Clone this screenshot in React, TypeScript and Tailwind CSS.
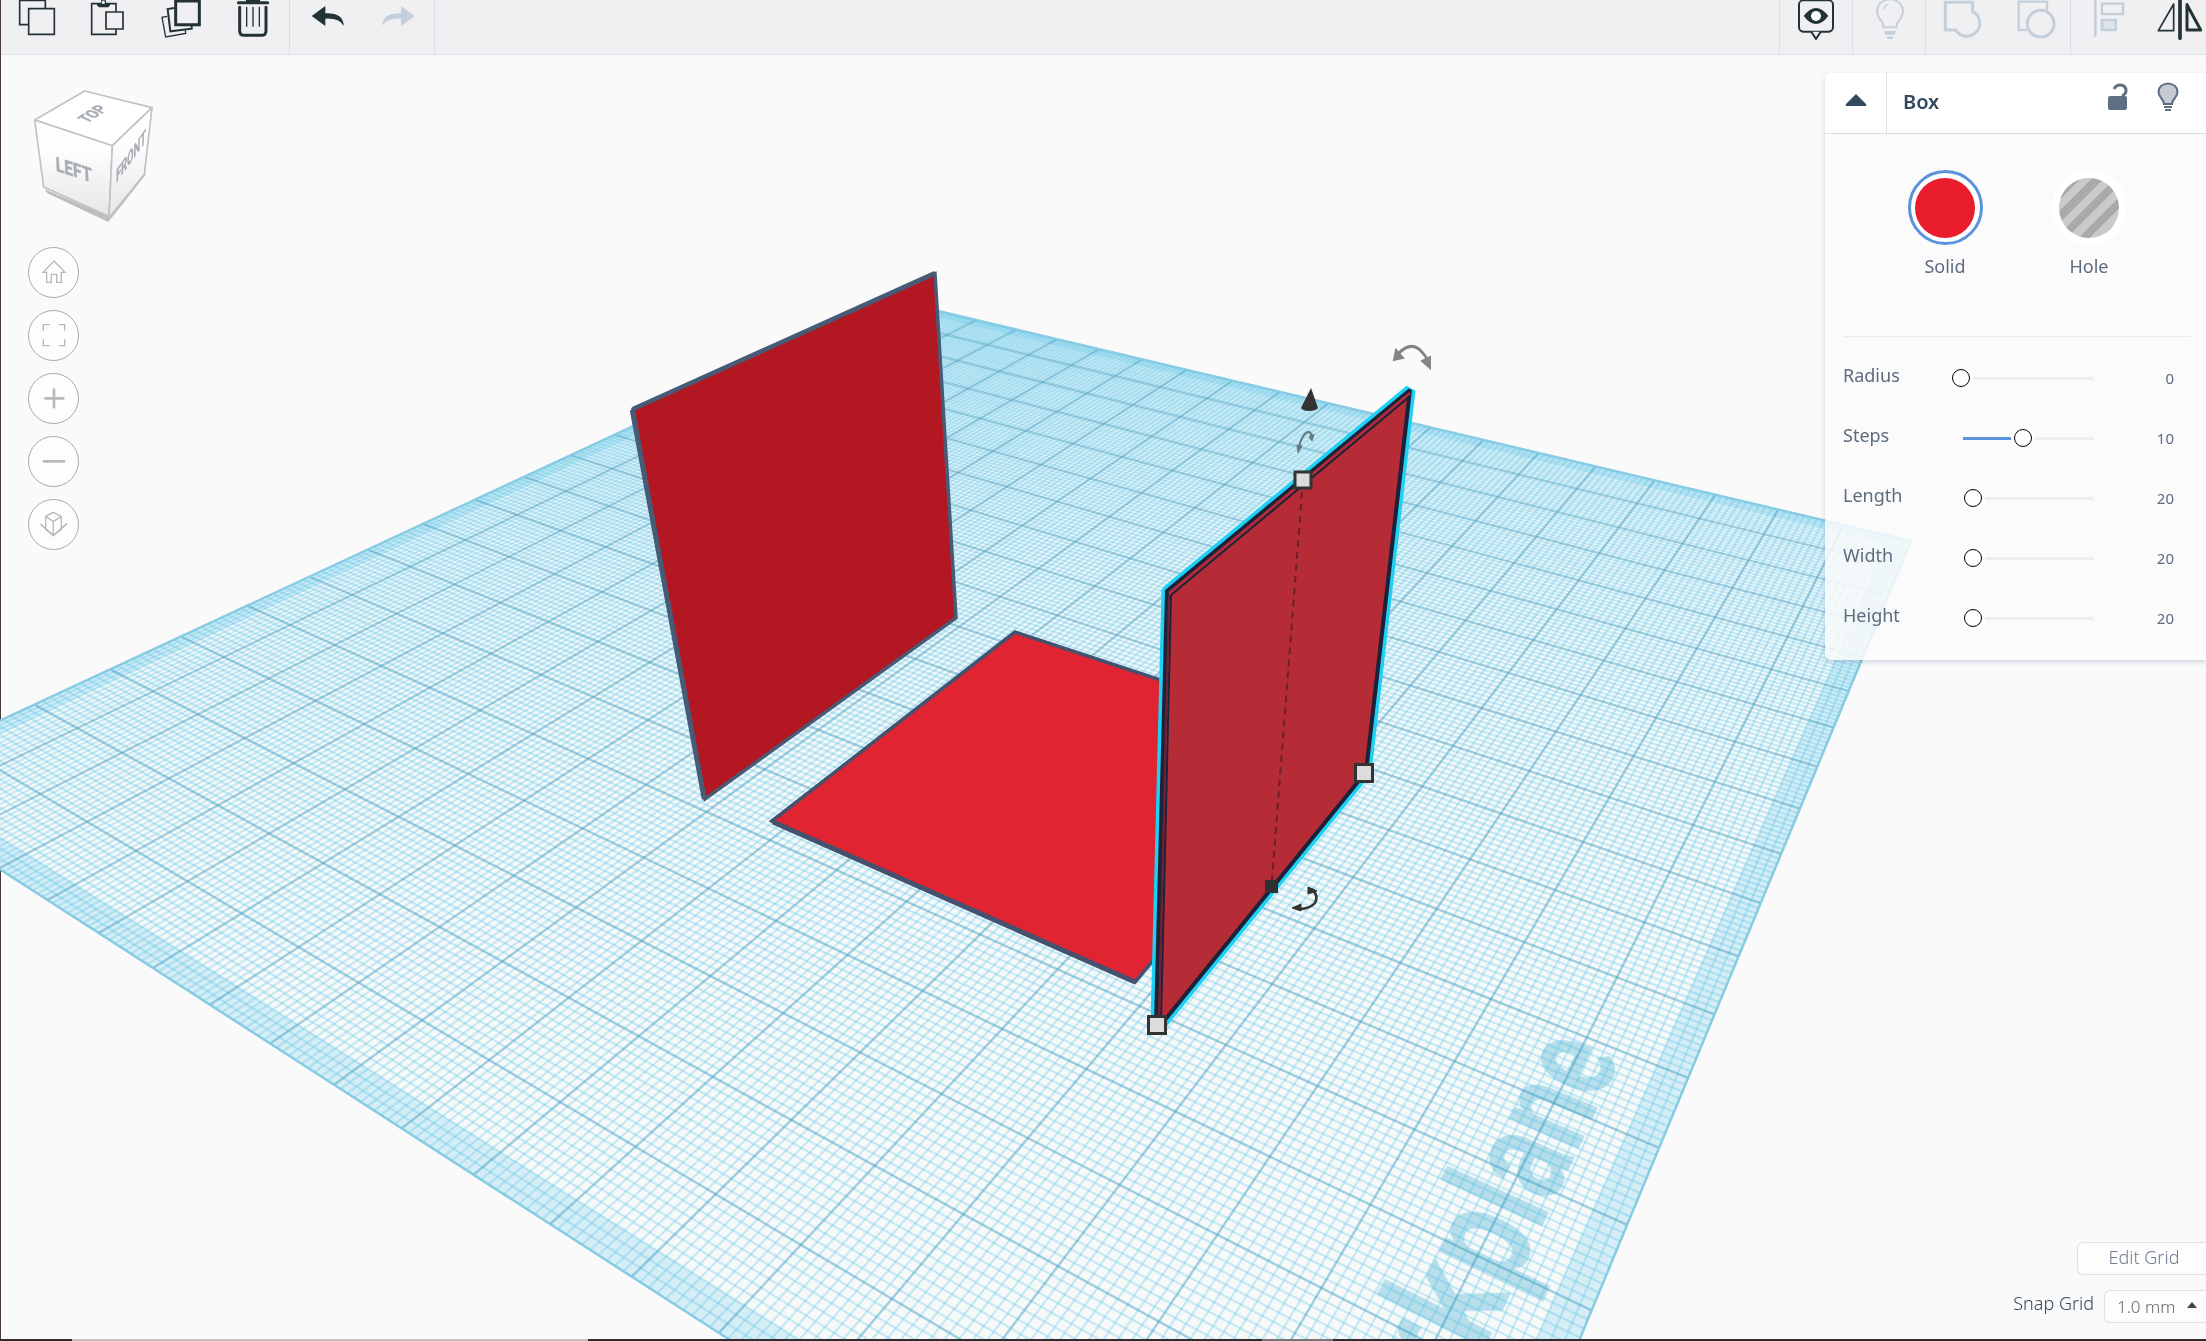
import { useState } from "react";
import type { CSSProperties, ReactNode } from "react";

type Point = [number, number];

/* ---------- workplane projection ---------- */

const PLANE_SIZE = 200; // mm
const CORNERS: Point[] = [
  [900, 302],
  [1911, 541],
  [1400, 1772],
  [-134, 783],
];

function squareToQuad([p0, p1, p2, p3]: Point[]) {
  const sx = p0[0] - p1[0] + p2[0] - p3[0];
  const sy = p0[1] - p1[1] + p2[1] - p3[1];
  const dx1 = p1[0] - p2[0];
  const dx2 = p3[0] - p2[0];
  const dy1 = p1[1] - p2[1];
  const dy2 = p3[1] - p2[1];
  const det = dx1 * dy2 - dx2 * dy1;
  const g = (sx * dy2 - dx2 * sy) / det;
  const h = (dx1 * sy - sx * dy1) / det;
  return {
    a: p1[0] - p0[0] + g * p1[0],
    b: p3[0] - p0[0] + h * p3[0],
    c: p0[0],
    d: p1[1] - p0[1] + g * p1[1],
    e: p3[1] - p0[1] + h * p3[1],
    f: p0[1],
    g,
    h,
  };
}

const m = squareToQuad(CORNERS);

function project(x: number, y: number) {
  const u = x / PLANE_SIZE;
  const v = y / PLANE_SIZE;
  const w = m.g * u + m.h * v + 1;
  return `${((m.a * u + m.b * v + m.c) / w).toFixed(2)} ${((m.d * u + m.e * v + m.f) / w).toFixed(2)}`;
}

// the label layer is 2000px wide, 10px to the millimetre
const K = 1 / 2000;
const planeMatrix = `matrix3d(${[
  m.a * K, m.d * K, 0, m.g * K,
  m.b * K, m.e * K, 0, m.h * K,
  0, 0, 1, 0,
  m.c, m.f, 0, 1,
].join(",")})`;

function rect(x0: number, y0: number, x1: number, y1: number) {
  return `M${project(x0, y0)}L${project(x1, y0)}L${project(x1, y1)}L${project(x0, y1)}Z`;
}

function gridLines(step: number, skip?: number) {
  const along: string[] = [];
  const across: string[] = [];
  for (let i = 0; i <= PLANE_SIZE; i += step) {
    if (skip && i % skip === 0) continue;
    along.push(`M${project(0, i)}L${project(PLANE_SIZE, i)}`);
    across.push(`M${project(i, 0)}L${project(i, PLANE_SIZE)}`);
  }
  return [along.join(""), across.join("")];
}

const minor = gridLines(1, 10);
const major = gridLines(10);
const BORDER = 3;

function Workplane() {
  return (
    <>
      <svg className="absolute left-0 top-0 h-[1341px] w-[2206px]" viewBox="0 0 2206 1341" aria-hidden="true">
        <path d={rect(0, 0, PLANE_SIZE, PLANE_SIZE)} fill="#f7f9f9" />
        <path
          d={rect(0, 0, PLANE_SIZE, PLANE_SIZE) + rect(BORDER, BORDER, PLANE_SIZE - BORDER, PLANE_SIZE - BORDER)}
          fill="#d5edf5"
          fillRule="evenodd"
        />
      </svg>
      <div
        className="absolute left-0 top-0 h-[2000px] w-[2000px] origin-top-left"
        style={{ transform: planeMatrix }}
      >
        <svg className="h-full w-full" viewBox="0 0 2000 2000">
          <text
            transform="translate(1938 1308) rotate(-90)"
            textAnchor="end"
            fill="#b7deea"
            className="font-['Roboto',sans-serif] text-[127px] font-bold"
          >
            Workplane
          </text>
        </svg>
      </div>
      <svg className="absolute left-0 top-0 h-[1341px] w-[2206px]" viewBox="0 0 2206 1341" aria-hidden="true">
        {minor.map((d, i) => (
          <path key={i} d={d} stroke="#4fc0e6" strokeOpacity="0.29" strokeWidth="2.2" />
        ))}
        {major.map((d, i) => (
          <path key={i} d={d} stroke="#3398c0" strokeOpacity="0.45" strokeWidth="2.4" />
        ))}
        <path d={rect(0, 0, PLANE_SIZE, PLANE_SIZE)} fill="none" stroke="#86cde6" strokeWidth="2" />
      </svg>
    </>
  );
}

/* ---------- shapes on the workplane ---------- */

function Handle({ x, y, size }: { x: number; y: number; size: number }) {
  return (
    <rect x={x - size / 2} y={y - size / 2} width={size} height={size} fill="#dcdcdc" stroke="#333" strokeWidth="3" />
  );
}

function Shapes() {
  return (
    <svg className="absolute left-0 top-0 h-[1341px] w-[2206px]" viewBox="0 0 2206 1341" fill="none" aria-hidden="true">
      {/* back wall */}
      <path d="M633 409L935 274L956 618L705 799Z" fill="#b31822" stroke="#475a76" strokeWidth="3.5" />
      <path d="M632 410L704 799M633 409L935 273" stroke="#475a76" strokeWidth="4.5" />
      {/* floor */}
      <path d="M772 821L1015 632L1200 693L1200 904L1135 982Z" fill="#e02432" stroke="#44526f" strokeWidth="3.5" />
      <path d="M773 822L1135 982" stroke="#44526f" strokeWidth="5" />
      {/* selected wall */}
      <path d="M1167 591L1410 390L1366 772L1160 1026L1156 1024Z" stroke="#1fd0f5" strokeWidth="11" strokeLinejoin="bevel" />
      <path
        d="M1167 591L1410 390L1366 772L1160 1026L1156 1024Z"
        fill="#b52c36"
        stroke="#1c2238"
        strokeWidth="4"
        strokeLinejoin="bevel"
      />
      <path d="M1169 593L1410 393" stroke="#b02c3c" strokeWidth="2.5" />
      <path d="M1171 595L1409 397M1171 595L1161 1022" stroke="#1c2238" strokeWidth="2" />
      <path d="M1169 596L1159 1018" stroke="#6b2036" strokeWidth="2" />
      <path d="M1302 492L1272 880" stroke="#6d2029" strokeWidth="2" strokeDasharray="7 5" />
      <rect x="1265" y="880" width="13" height="13" fill="#2f3030" />
      <Handle x={1303} y={480} size={16} />
      <Handle x={1364} y={773} size={17} />
      <Handle x={1157} y={1025} size={17} />
      {/* lift cone */}
      <path d="M1311 388L1301 408Q1303 411 1309 411Q1316 411 1318 408Z" fill="#333" />
      {/* rotate arrows */}
      <g stroke="#858585" strokeWidth="3">
        <path d="M1399 353Q1411 341 1421 351Q1426 356 1428 361" />
        <path d="M1396 350L1394 360L1403 358ZM1422 361L1430 368V357Z" fill="#858585" strokeWidth="2" />
      </g>
      <g stroke="#65797f" strokeWidth="2">
        <path d="M1299 447Q1302 434 1308 432Q1312 431 1311 439" />
        <path d="M1297 445L1298 453L1302 446ZM1309 437L1312 441L1314 434Z" fill="#65797f" strokeWidth="1" />
      </g>
      <g stroke="#333" strokeWidth="2.5">
        <path d="M1312 889Q1319 896 1315 903Q1311 908 1301 909" />
        <path d="M1308 887L1317 891L1308 894ZM1292 908L1301 904V911Z" fill="#333" strokeWidth="1" />
      </g>
    </svg>
  );
}

/* ---------- toolbar ---------- */

function ToolButton({ label, viewBox, muted, children }: { label: string; viewBox: string; muted?: boolean; children: ReactNode }) {
  return (
    <button
      type="button"
      aria-label={label}
      className={muted ? "h-full w-[72px] shrink-0 text-[#c3cfda]" : "h-full w-[72px] shrink-0 text-[#233233]"}
    >
      <svg className="h-full w-full" viewBox={viewBox} fill="none" stroke="currentColor" strokeWidth="5">
        {children}
      </svg>
    </button>
  );
}

function Toolbar() {
  return (
    <header className="relative z-10 flex h-[55px] justify-between overflow-hidden border-b border-[#dcdfe6] bg-[#f0f0f3]">
      <div className="flex h-[54px]">
        <div className="flex border-r border-[#dcdfe6]">
          <ToolButton label="Copy" viewBox="3 0 216 162">
            <path d="M86 74H59V1H136V26" />
            <path d="M86 26H163V103H86Z" />
          </ToolButton>
          <ToolButton label="Paste" viewBox="219 0 216 162">
            <path d="M318 103H275V11H348V36M348 88V103H318" />
            <path d="M318 36H369V87H318Z" />
            <path d="M291 10H303V1H318V10H330V16L325 22H297L291 16Z" fill="currentColor" stroke="none" />
            <circle cx="310" cy="7" r="5" fill="#f0f0f3" stroke="none" />
          </ToolButton>
          <ToolButton label="Duplicate" viewBox="435 0 216 162">
            <path d="M527 3H598V74H527Z" strokeWidth="9" />
            <path d="M523 24L503 27L511 94L575 86V76" strokeWidth="6" />
            <path d="M502 49L486 52L497 111L557 100L556 91" strokeWidth="4" />
          </ToolButton>
          <ToolButton label="Delete" viewBox="651 0 216 162">
            <path d="M715 8H803M742 1H776" strokeWidth="9" strokeLinecap="round" />
            <path d="M719 22V92Q719 106 733 106H784Q798 106 798 92V22" strokeWidth="9" strokeLinecap="round" />
            <path d="M740 22V79M759 22V79M778 22V79" strokeWidth="4" strokeLinecap="round" />
          </ToolButton>
        </div>
        <div className="flex border-r border-[#dcdfe6]">
          <ToolButton label="Undo" viewBox="870 0 216 162">
            <path d="M935 48L976 18V40Q1030 38 1031 77Q1018 54 976 56V78Z" fill="currentColor" stroke="none" />
          </ToolButton>
          <ToolButton label="Redo" viewBox="1086 0 216 162" muted>
            <path d="M1244 48L1203 18V40Q1149 38 1147 77Q1160 54 1203 56V79Z" fill="currentColor" stroke="none" />
          </ToolButton>
        </div>
      </div>
      <div className="-mr-[9px] flex h-[54px]">
        <div className="flex border-l border-[#dcdfe6]">
          <ToolButton label="Show all" viewBox="30 0 216 162">
            <rect x="87" y="1" width="102" height="94" rx="13" strokeWidth="6" />
            <path d="M124 95L138 117L152 95" fill="#f0f0f3" strokeWidth="6" strokeLinejoin="round" />
            <path d="M101 48Q138 0 175 48Q138 96 101 48Z" fill="currentColor" stroke="none" />
            <circle cx="138" cy="48" r="15" fill="#fff" stroke="none" />
          </ToolButton>
        </div>
        <div className="flex border-l border-[#dcdfe6]">
          <ToolButton label="Light" viewBox="249 0 216 162" muted>
            <path d="M340 82V75Q340 68 330 58Q314 36 327 14Q340 -2 360 -2Q380 -2 393 14Q406 36 390 58Q380 68 380 75V82Z" strokeWidth="6" />
            <path d="M340 27Q343 19 352 14" strokeWidth="4" strokeLinecap="round" />
            <path d="M342 93H378L374 104H346ZM349 110H371L367 117H353Z" fill="currentColor" stroke="none" />
          </ToolButton>
        </div>
        <div className="flex border-l border-[#dcdfe6]">
          <ToolButton label="Group" viewBox="471 0 216 162" muted>
            <path d="M529 7H611V35A39 39 0 1 1 560 90H529Z" strokeWidth="9" />
          </ToolButton>
          <ToolButton label="Ungroup" viewBox="687 0 216 162" muted>
            <path d="M774 90H749V5H834V32" strokeWidth="7" />
            <circle cx="815" cy="71" r="40" strokeWidth="9" />
          </ToolButton>
        </div>
        <div className="flex border-l border-[#dcdfe6]">
          <ToolButton label="Align" viewBox="906 0 216 162" muted>
            <path d="M979 0V107" strokeWidth="8" strokeLinecap="round" />
            <path d="M999 11H1062V42H999Z" strokeWidth="7" />
            <path d="M999 60H1040V90H999Z" strokeWidth="8" fill="#dde4ea" />
          </ToolButton>
          <ToolButton label="Mirror" viewBox="1122 0 216 162">
            <path d="M1214 12V92H1168Z" strokeWidth="5" strokeLinejoin="round" />
            <path d="M1233 0V115" strokeWidth="11" strokeLinecap="round" />
            <path d="M1254 14V90H1295Z" strokeWidth="9" strokeLinejoin="round" />
          </ToolButton>
        </div>
      </div>
    </header>
  );
}

/* ---------- navigation ---------- */

function ViewCube() {
  return (
    <svg className="h-[140px] w-[140px]" viewBox="60 50 420 420" aria-label="View cube">
      <defs>
        <linearGradient id="cube-side" x1="0" y1="0" x2="0" y2="1">
          <stop offset="0.3" stopColor="#fefefe" />
          <stop offset="1" stopColor="#e6e6e6" />
        </linearGradient>
      </defs>
      <path d="M134 360L142 372L325 458L436 318V300L325 440Z" fill="#bdbdbd" />
      <g stroke="#c2c2c2" strokeWidth="5" strokeLinejoin="round">
        <path d="M254 65L456 115L337 229L104 152Z" fill="#fff" />
        <path d="M104 152L337 229L327 441L131 353Z" fill="url(#cube-side)" />
        <path d="M456 115L337 229L327 445L433 315Z" fill="url(#cube-side)" />
      </g>
      <g fill="#a9adb6" stroke="#a9adb6" strokeWidth="1.5" className="font-['Roboto',sans-serif] font-bold">
        <text transform="matrix(0.8 0.26 0.04 1 168 304)" fontSize="59">LEFT</text>
        <text transform="matrix(0.5 -0.7 -0.02 1 348 342)" fontSize="56">FRONT</text>
        <text transform="matrix(0.62 -0.42 0.85 0.42 262 162)" fontSize="52">TOP</text>
      </g>
    </svg>
  );
}

function NavButton({ label, children }: { label: string; children: ReactNode }) {
  return (
    <button type="button" aria-label={label} className="size-[51px] rounded-full border border-[#a6a8b2] bg-[#fdfdfd]">
      <svg className="h-full w-full" viewBox="0 0 147 147" fill="none" stroke="#b9b9b9" strokeWidth="4">
        {children}
      </svg>
    </button>
  );
}

function Navigation() {
  return (
    <nav aria-label="View" className="absolute -left-px top-0 flex flex-col items-start">
      <div className="pl-5 pt-[31px]">
        <ViewCube />
      </div>
      <div className="flex flex-col gap-3 pl-7 pt-[21px]">
        <NavButton label="Home view">
          <path d="M75 39L42 73H53V103H67V79H83V103H97V73H108Z" />
        </NavButton>
        <NavButton label="Fit view">
          <path d="M62 41H43V59M89 41H107V59M107 85V104H89M62 104H43V85" />
        </NavButton>
        <NavButton label="Zoom in">
          <path d="M49 73H103M75 47V100" strokeWidth="8" strokeLinecap="round" />
        </NavButton>
        <NavButton label="Zoom out">
          <path d="M45 73H105" strokeWidth="8" strokeLinecap="round" />
        </NavButton>
        <NavButton label="Perspective view">
          <path d="M73 37L97 49V88L73 106L50 88V49ZM50 49L73 65L97 49M73 65V106" strokeWidth="4" />
          <path d="M34 72L73 107L114 70" strokeWidth="5" />
        </NavButton>
      </div>
    </nav>
  );
}

/* ---------- inspector ---------- */

const PARAMS = [
  { name: "Radius", value: 0, max: 20 },
  { name: "Steps", value: 10, max: 20 },
  { name: "Length", value: 20, max: 200 },
  { name: "Width", value: 20, max: 200 },
  { name: "Height", value: 20, max: 200 },
];

function ParamRow({ name, initial, max }: { name: string; initial: number; max: number }) {
  const [value, setValue] = useState(initial);
  const id = `param-${name.toLowerCase()}`;
  const fill = 11 + (value / max) * 122;
  const track: CSSProperties = {
    backgroundImage: `linear-gradient(to right, transparent 11px, #5a93dc 11px, #5a93dc ${fill}px, #eeeeee ${fill}px)`,
  };
  return (
    <div className="flex h-[60px] items-center text-[18px] text-[#5c6b7e]">
      <label htmlFor={id} className="w-[109px] pb-1.5">{name}</label>
      <input
        id={id}
        type="range"
        min={0}
        max={max}
        value={value}
        onChange={(e) => setValue(Number(e.target.value))}
        style={track}
        className="h-[3px] w-[142px] appearance-none [&::-webkit-slider-thumb]:size-[18px] [&::-webkit-slider-thumb]:appearance-none [&::-webkit-slider-thumb]:rounded-full [&::-webkit-slider-thumb]:border [&::-webkit-slider-thumb]:border-black [&::-webkit-slider-thumb]:bg-white [&::-webkit-slider-thumb]:shadow-[0_0_0_3px_#fdfdfd]"
      />
      <output htmlFor={id} className="flex-1 pr-[17px] text-right text-[15px]">{value}</output>
    </div>
  );
}

function Inspector() {
  return (
    <aside className="absolute right-0 top-[18px] w-[381px] rounded-l-md bg-[#fafafa]/85 pb-3 shadow-[0_2px_5px_rgba(80,100,150,0.25)]">
      <div className="flex h-[61px] items-stretch rounded-tl-md border-b border-[#dcdfe6] bg-white">
        <button type="button" aria-label="Collapse" className="flex w-[62px] items-center justify-center border-r border-[#dcdfe6] pb-1.5">
          <svg className="h-[14px] w-6" viewBox="0 0 24 14">
            <path d="M12 1L22 11Q23 13 21 13H3Q1 13 2 11Z" fill="#34495e" />
          </svg>
        </button>
        <h2 className="flex-1 self-center pb-0.5 pl-4 text-[20px] font-semibold text-[#34495e]">Box</h2>
        <div className="flex gap-[26px] pr-[26px] pt-[9px]">
          <button type="button" aria-label="Lock" className="h-[30px] w-6">
            <svg className="h-full w-full" viewBox="0 0 24 30">
              <rect x="2" y="14" width="19" height="14" rx="2" fill="#5f6f82" />
              <path d="M8 7Q10 3 14 3Q20 3 20 9Q20 12 16 14" fill="none" stroke="#5f6f82" strokeWidth="3" />
            </svg>
          </button>
          <button type="button" aria-label="Hide" className="h-[32px] w-6">
            <svg className="h-full w-full" viewBox="0 0 24 32">
              <path d="M8 22Q8 19 5 16Q0 9 5 4Q12 -1 19 4Q24 9 19 16Q16 19 16 22Z" fill="#c6cbd3" stroke="#5f6f82" strokeWidth="2" />
              <path d="M8 25H16M9 28H15" stroke="#5f6f82" strokeWidth="2" />
            </svg>
          </button>
        </div>
      </div>

      <div className="pl-[18px] pr-[15px]">
        <div className="flex justify-center gap-[69px] border-b border-[#ebebeb] pb-[56px] pt-9 text-[18px] text-[#5c6b7e]">
          <button type="button" className="flex w-[75px] flex-col items-center gap-2">
            <span className="flex size-[75px] items-center justify-center rounded-full border-[3px] border-[#5a93dc] bg-white">
              <span className="size-[60px] rounded-full bg-[#ea1d2d]" />
            </span>
            Solid
          </button>
          <button type="button" className="flex w-[75px] flex-col items-center gap-2">
            <span className="flex size-[75px] items-center justify-center rounded-full bg-white">
              <span className="size-[60px] rounded-full bg-[repeating-linear-gradient(135deg,#cacaca_0px,#cacaca_8px,#a9a9a9_8px,#a9a9a9_16px)]" />
            </span>
            Hole
          </button>
        </div>
        <div className="pt-[11px]">
          {PARAMS.map((p) => (
            <ParamRow key={p.name} name={p.name} initial={p.value} max={p.max} />
          ))}
        </div>
      </div>
    </aside>
  );
}

function GridControls() {
  return (
    <div className="absolute bottom-4 right-0 flex flex-col items-end gap-[15px] text-[18px]">
      <button type="button" className="h-[33px] w-[129px] rounded-l-md border border-r-0 border-[#dfe1e5] bg-[#fdfdfd] pb-1 pl-1 font-light leading-[26px] text-[#6f7f92]">
        Edit Grid
      </button>
      <div className="flex items-center gap-[10px]">
        <label htmlFor="snap" className="pb-1.5 font-light text-[#34495e]">Snap Grid</label>
        <div className="relative">
          <select
            id="snap"
            defaultValue="1.0 mm"
            className="h-[33px] w-[102px] appearance-none rounded-l-md border border-r-0 border-[#dfe1e5] bg-[#fdfdfd] pl-3 text-[17px] font-light text-[#666]"
          >
            <option>0.5 mm</option>
            <option>1.0 mm</option>
            <option>2.0 mm</option>
          </select>
          <svg className="pointer-events-none absolute right-[9px] top-3 h-[6px] w-[10px]" viewBox="0 0 10 6" aria-hidden="true">
            <path d="M5 0L10 6H0Z" fill="#444" />
          </svg>
        </div>
      </div>
    </div>
  );
}

export default function App() {
  return (
    <div className="flex h-screen flex-col overflow-hidden bg-[#fafafa] font-['Noto_Sans',sans-serif]">
      <div className="relative flex min-h-0 flex-1 flex-col border-l border-[#4a3a3c]">
        <div className="absolute inset-y-0 -left-px right-0 overflow-hidden">
          <Workplane />
          <Shapes />
        </div>
        <Toolbar />
        <main className="relative flex-1">
          <Navigation />
          <Inspector />
          <GridControls />
        </main>
      </div>
      <div className="flex h-[2px] shrink-0 bg-[#2f2b2e]">
        <div className="ml-[72px] w-[516px] bg-[#c2c2c2]" />
        <div className="ml-[674px] w-[71px] bg-[#777]" />
      </div>
    </div>
  );
}
